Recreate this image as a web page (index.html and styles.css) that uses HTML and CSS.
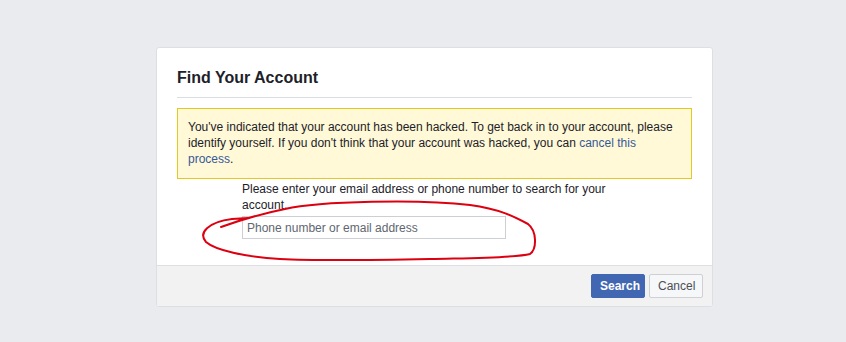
FILE: index.html
```html
<!DOCTYPE html>
<html>
<head>
<meta charset="utf-8">
<link rel="stylesheet" href="styles.css">
</head>
<body>
<div class="card">
  <div class="card-header">
    <h2 class="title">Find Your Account</h2>
  </div>
  <div class="card-body">
    <div class="notice">You've indicated that your account has been hacked. To get back in to your account, please identify yourself. If you don't think that your account was hacked, you can <a class="link" href="#">cancel this process</a>.</div>
    <div class="form">
      <div class="prompt">Please enter your email address or phone number to search for your account.</div>
      <input class="field" type="text" placeholder="Phone number or email address">
    </div>
  </div>
  <div class="card-footer">
    <button class="btn btn-primary">Search</button>
    <button class="btn btn-secondary">Cancel</button>
  </div>
</div>
<svg class="annotation" width="846" height="342" viewBox="0 0 846 342">
  <path d="M221,227 C235,222 260,214 285,209 C320,201 420,199 470,205 C500,209 515,217 528,224 C537,231 537,249 530,254 C515,258 470,258 430,259 C380,260 320,261 280,259 C245,257 215,250 206,242 C198,233 208,222 232,219 L248,218" fill="none" stroke="#dc0010" stroke-width="2" stroke-linecap="round" stroke-linejoin="round"/>
</svg>
</body>
</html>
```
FILE: styles.css
```css
html, body {
  margin: 0;
  padding: 0;
  background: #e9ebee;
  font-family: "Liberation Sans", Arial, sans-serif;
  font-size: 12px;
  color: #1d2129;
}
body {
  position: relative;
  width: 846px;
  height: 342px;
  overflow: hidden;
}
.card {
  margin: 47px 0 0 156px;
  width: 555px;
  background: #fff;
  border: 1px solid #dddfe2;
  border-radius: 3px;
  overflow: hidden;
}
.card-header {
  margin: 0 20px;
  padding: 20px 0 9px;
  border-bottom: 1px solid #dadde1;
}
.title {
  margin: 0;
  font-size: 16px;
  line-height: 20px;
  font-weight: bold;
  color: #1d2129;
}
.card-body {
  padding: 10px 20px 26px;
}
.notice {
  background: #fff9d7;
  border: 1px solid #e2c822;
  padding: 10px 10px 11px;
  line-height: 16px;
  color: #1d2129;
}
.link {
  color: #365899;
  text-decoration: none;
}
.form {
  margin: 2px 0 0 65px;
  width: 390px;
}
.prompt {
  line-height: 16px;
}
.field {
  display: block;
  margin-top: 3px;
  box-sizing: border-box;
  width: 264px;
  height: 23px;
  padding: 0 4px;
  border: 1px solid #ccd0d5;
  font-family: "Liberation Sans", Arial, sans-serif;
  font-size: 12px;
  color: #1d2129;
  outline: none;
}
.field::placeholder {
  color: #606770;
}
.card-footer {
  display: flex;
  justify-content: flex-end;
  gap: 4px;
  padding: 8px 9px 8px;
  background: #f2f2f2;
  border-top: 1px solid #dddfe2;
}
.btn {
  box-sizing: border-box;
  height: 24px;
  padding: 0 8px;
  border-radius: 2px;
  font-family: "Liberation Sans", Arial, sans-serif;
  font-size: 12px;
  line-height: 22px;
}
.btn-primary {
  width: 54px;
  background: #4267b2;
  border: 1px solid #4267b2;
  color: #fff;
  font-weight: bold;
}
.btn-secondary {
  width: 54px;
  background: #f6f7f9;
  border: 1px solid #ced0d4;
  color: #4b4f56;
}
.annotation {
  position: absolute;
  top: 0;
  left: 0;
  pointer-events: none;
}
```
